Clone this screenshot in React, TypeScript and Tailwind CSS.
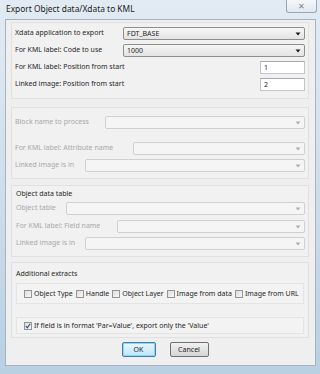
import React from "react";

const font = { fontFamily: '"Noto Sans", "Open Sans", sans-serif' };

function Arrow({ disabled }: { disabled?: boolean }) {
  return (
    <svg width="6" height="4" viewBox="0 0 6 4" className="shrink-0">
      <path d="M0.5 0.5 L5.5 0.5 L3 3.5 Z" fill={disabled ? "#b0b0b0" : "#1a1a1a"} />
    </svg>
  );
}

function Combo({ value, left, disabled }: { value?: string; left: number; disabled?: boolean }) {
  return (
    <div
      className={
        disabled
          ? "h-[13px] flex items-center justify-end pr-[3px] rounded-[2px] border border-[#d0d0d0] bg-[#f5f5f5]"
          : "h-[13px] flex items-center justify-between pl-[3px] pr-[3px] rounded-[2px] border border-[#8e8e8e] bg-gradient-to-b from-[#f6f6f6] to-[#e3e3e3]"
      }
      style={{ width: 305 - left }}
    >
      {value ? <span className="text-[7px] leading-none text-[#262626]">{value}</span> : null}
      <Arrow disabled={disabled} />
    </div>
  );
}

function Row({ label, left, value, disabled }: { label: string; left: number; value?: string; disabled?: boolean }) {
  return (
    <div className="flex items-center justify-between h-[13px]">
      <span className={"text-[7px] leading-none pb-[3px] whitespace-nowrap " + (disabled ? "text-[#a8a8a8]" : "text-[#262626]")}>
        {label}
      </span>
      <Combo value={value} left={left} disabled={disabled} />
    </div>
  );
}

function InputRow({ label, value }: { label: string; value: string }) {
  return (
    <div className="flex items-center justify-between h-[13px]">
      <span className="text-[7px] leading-none pb-[3px] whitespace-nowrap text-[#262626]">{label}</span>
      <div className="w-[45px] h-[13px] bg-white border border-[#c2c6ca] border-t-[#a4aab0] flex items-center pl-[3px]">
        <span className="text-[7px] leading-none text-[#262626]">{value}</span>
      </div>
    </div>
  );
}

function Check({ label, checked }: { label: string; checked?: boolean }) {
  return (
    <div className="flex items-center gap-[2px]">
      <div className="w-[8px] h-[8px] border border-[#959595] bg-gradient-to-br from-[#dedede] to-[#f8f8f8] flex items-center justify-center">
        {checked ? (
          <svg width="6" height="6" viewBox="0 0 6 6">
            <path d="M0.8 3.2 L2.3 4.8 L5.2 0.8" stroke="#2a4a7a" strokeWidth="1.1" fill="none" />
          </svg>
        ) : null}
      </div>
      <span className="text-[7px] leading-none text-[#262626] whitespace-nowrap">{label}</span>
    </div>
  );
}

export default function App() {
  return (
    <div
      className="w-[320px] h-[374px] overflow-hidden flex flex-col bg-gradient-to-b from-[#e2ebf3] via-[#cfdeeb] to-[#b9cfe2]"
      style={font}
    >
      {/* title bar */}
      <div className="h-[19px] flex items-start justify-between shrink-0">
        <span className="pl-[6px] pt-[5px] text-[8.4px] leading-none text-[#1b1b1b] whitespace-nowrap">
          Export Object data/Xdata to KML
        </span>
        <div className="mr-[3px] w-[31px] h-[13px] rounded-b-[3px] border border-t-0 border-[#9aa7b6] bg-gradient-to-b from-[#f4f7fa] to-[#e1e8ef] flex items-center justify-center">
          <span className="text-[8px] leading-none text-[#7a838d]">✕</span>
        </div>
      </div>

      {/* client area */}
      <div className="ml-[5px] w-[311px] h-[347px] border border-[#a6b3c1] bg-[#efefef] flex flex-col items-start pl-[5px] shrink-0">
        {/* panel 1 */}
        <div className="mt-[2px] w-[298px] h-[77px] border border-[#e0e0e0] bg-[#f1f1f1] flex flex-col gap-[4px] pt-[4px] pl-[3px] pr-[3px]">
          <Row label="Xdata application to export" left={123} value="FDT_BASE" />
          <Row label="For KML label: Code to use" left={123} value="1000" />
          <InputRow label="For KML label: Position from start" value="1" />
          <InputRow label="Linked image: Position from start" value="2" />
        </div>

        {/* panel 2 */}
        <div className="mt-[8px] w-[298px] h-[72px] border border-[#e0e0e0] bg-[#f1f1f1] flex flex-col pt-[8px] pl-[3px] pr-[3px]">
          <Row label="Block name to process" left={105} disabled />
          <div className="h-[13px]" />
          <Row label="For KML label: Attribute name" left={133} disabled />
          <div className="h-[4px]" />
          <Row label="Linked image is in" left={85} disabled />
        </div>

        {/* panel 3 */}
        <div className="mt-[6px] w-[298px] h-[72px] border border-[#e0e0e0] bg-[#f1f1f1] flex flex-col pt-[4px] pl-[4px] pr-[3px]">
          <span className="text-[7px] leading-none text-[#262626] h-[12px]">Object data table</span>
          <Row label="Object table" left={66} disabled />
          <div className="h-[5px]" />
          <Row label="For KML label: Field name" left={117} disabled />
          <div className="h-[4px]" />
          <Row label="Linked image is in" left={85} disabled />
        </div>

        {/* panel 4 */}
        <div className="mt-[5px] w-[298px] h-[76px] border border-[#e0e0e0] bg-[#f1f1f1] flex flex-col pt-[7px] pl-[4px] pr-[4px]">
          <span className="text-[7px] leading-none text-[#262626] h-[13px]">Additional extracts</span>
          <div className="h-[21px] border border-[#e4e4e4] bg-[#f3f3f3] flex items-center gap-[3px] pl-[7px]">
            <Check label="Object Type" />
            <Check label="Handle" />
            <Check label="Object Layer" />
            <Check label="Image from data" />
            <Check label="Image from URL" />
          </div>
          <div className="mt-[13px] h-[17px] border border-[#e4e4e4] bg-[#f3f3f3] flex items-center pl-[7px]">
            <Check label="If field is in format 'Par=Value', export only the 'Value'" checked />
          </div>
        </div>

        {/* buttons */}
        <div className="mt-[4px] w-[298px] flex justify-center gap-[14px] pl-[10px]">
          <div className="w-[34px] h-[15px] rounded-[2px] border border-[#3c7fb1] bg-gradient-to-b from-[#eaf6fd] to-[#bee6fd] flex items-center justify-center shadow-[inset_0_0_0_1px_#8fd3f5]">
            <span className="text-[7px] leading-none text-[#1e1e1e]">OK</span>
          </div>
          <div className="w-[39px] h-[15px] rounded-[2px] border border-[#707070] bg-gradient-to-b from-[#f2f2f2] to-[#d4d4d4] flex items-center justify-center">
            <span className="text-[7px] leading-none text-[#1e1e1e]">Cancel</span>
          </div>
        </div>
      </div>
    </div>
  );
}
